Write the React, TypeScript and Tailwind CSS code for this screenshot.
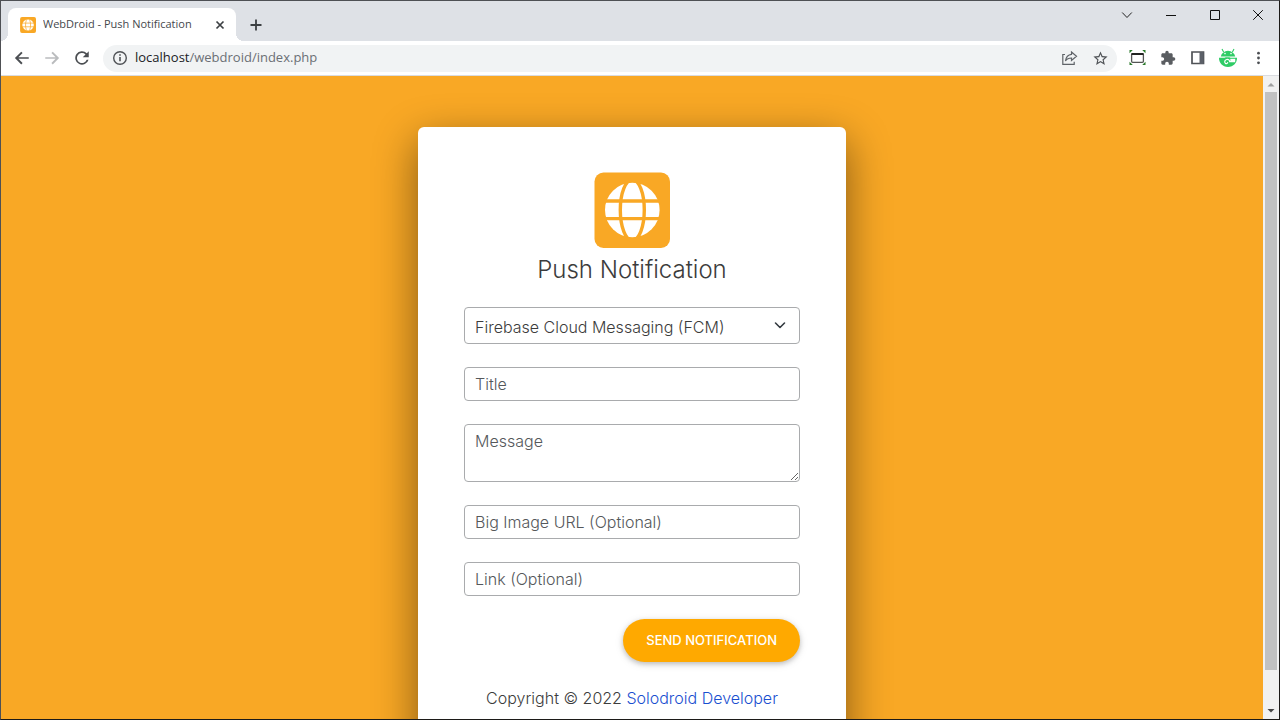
import type { ReactNode } from "react";

const ui = "font-['Open_Sans','Noto_Sans',sans-serif]";

function Globe({ className }: { className: string }) {
  return (
    <svg viewBox="0 0 76 76" className={className} aria-hidden="true">
      <rect x="0.5" y="0.5" width="75.5" height="75.5" rx="9" fill="#f9a825" />
      <circle cx="38.300" cy="38" r="27.3" fill="#fff" />
      <g fill="none" stroke="#f9a825" strokeWidth="3.4">
        <ellipse cx="38.300" cy="38" rx="12" ry="30.500" />
        <path d="M9 29h58M9 46.600h58" />
      </g>
    </svg>
  );
}

function IconButton({ label, className, children }: { label: string; className: string; children: ReactNode }) {
  return (
    <button type="button" aria-label={label} className={`flex shrink-0 items-center justify-center ${className}`}>
      {children}
    </button>
  );
}

function TabStrip() {
  return (
    <header className="flex h-10 shrink-0 items-end bg-[#dee1e6] pl-[7px]">
      <div className="relative flex h-[33px] w-[228px] items-center rounded-t-lg bg-white pl-3 pr-2 text-[#45484c]">
        <span className="absolute -left-2 bottom-0 size-2 bg-[radial-gradient(circle_at_0_0,transparent_8px,white_8px)]" />
        <span className="absolute -right-2 bottom-0 size-2 bg-[radial-gradient(circle_at_100%_0,transparent_8px,white_8px)]" />
        <Globe className="size-4 shrink-0" />
        <span className={`${ui} ml-[7px] flex-1 truncate text-[11px]`}>WebDroid - Push Notification</span>
        <IconButton label="Close tab" className="size-4">
          <svg viewBox="0 0 16 16" className="size-4" stroke="#3c4043" strokeWidth="1.700"><path d="M4.500 4.500l7 7M11.500 4.500l-7 7" /></svg>
        </IconButton>
      </div>
      <IconButton label="New tab" className="ml-3 h-[33px] w-4">
        <svg viewBox="0 0 16 16" className="size-4" stroke="#3c4043" strokeWidth="1.800"><path d="M8 2.500v11M2.500 8h11" /></svg>
      </IconButton>
      <div className="ml-auto flex h-[27px] self-start">
        <IconButton label="Search tabs" className="w-11">
          <svg viewBox="0 0 14 14" className="size-3.5" fill="none" stroke="#222"><path d="M2.200 4.500L7 9.500l4.800-5" /></svg>
        </IconButton>
        <IconButton label="Minimize" className="w-11">
          <svg viewBox="0 0 14 14" className="size-3.5" fill="none" stroke="#111"><path d="M2 7.500h10" /></svg>
        </IconButton>
        <IconButton label="Maximize" className="w-11">
          <svg viewBox="0 0 14 14" className="size-3.5" fill="none" stroke="#111"><path d="M2.500 2.500h9v9h-9z" /></svg>
        </IconButton>
        <IconButton label="Close window" className="w-[42px]">
          <svg viewBox="0 0 14 14" className="size-3.5" fill="none" stroke="#111"><path d="M2.200 2.200l9.600 9.600M11.800 2.200l-9.600 9.600" /></svg>
        </IconButton>
      </div>
    </header>
  );
}

function Toolbar() {
  return (
    <nav className="flex h-[35px] shrink-0 items-center border-b border-[#dadce0] bg-white px-3">
      <div className="flex gap-3">
        <IconButton label="Back" className="size-[18px]">
          <svg viewBox="0 0 24 24" className="size-[18px]" fill="#4b4e52"><path d="M21 10.900H7.200l5.600-5.600L11 3.500 2.500 12l8.500 8.500 1.800-1.800-5.600-5.600H21z" /></svg>
        </IconButton>
        <IconButton label="Forward" className="size-[18px]">
          <svg viewBox="0 0 24 24" className="size-[18px]" fill="#babcbe"><path d="M3 10.900h13.800l-5.600-5.600L13 3.500l8.500 8.500-8.500 8.500-1.800-1.800 5.600-5.600H3z" /></svg>
        </IconButton>
        <IconButton label="Reload" className="size-[18px]">
          <svg viewBox="0 0 24 24" className="size-[18px]" fill="#4b4e52"><path d="M18.400 5.600A9 9 0 1 0 20.700 14.300h-2.400A6.700 6.700 0 1 1 16.700 7.300L13 11h8V3z" /></svg>
        </IconButton>
      </div>
      <div className="ml-3 flex h-[27px] min-w-0 flex-1 items-center rounded-full bg-[#f1f3f4] px-2">
        <svg viewBox="0 0 18 18" className="size-[18px] shrink-0" fill="none" stroke="#4f5256" strokeWidth="1.400" aria-hidden="true">
          <circle cx="9" cy="9" r="6.300" /><path d="M9 8v4.300M9 5.300v1.500" strokeWidth="1.600" />
        </svg>
        <div className={`${ui} ml-1.5 flex-1 text-[13px] text-[#6b6f74]`}>
          <span className="text-[#202124]">localhost</span>/webdroid/index.php
        </div>
        <IconButton label="Share page" className="size-[18px]">
          <svg viewBox="0 0 18 18" className="size-[18px]" fill="none" stroke="#5f6368" strokeWidth="1.200"><path d="M4 5.500H1.800v9.800h11.400v-2.500" /><path d="M10.500 3l5 4.300-5 4.200V9c-2.700 0-4.700.9-6 3 .5-3.700 2.500-6.200 6-6.600z" /></svg>
        </IconButton>
        <IconButton label="Bookmark this tab" className="ml-3 size-[18px]">
          <svg viewBox="0 0 24 24" className="size-[17px]" fill="#4f5256"><path d="M22 9.240l-7.190-.62L12 2 9.190 8.630 2 9.240l5.460 4.730L5.820 21 12 17.270 18.180 21l-1.630-7.030L22 9.240zM12 15.400l-3.760 2.270 1-4.280-3.320-2.880 4.380-.38L12 6.100l1.710 4.040 4.380.38-3.320 2.880 1 4.280L12 15.400z" /></svg>
        </IconButton>
      </div>
      <div className="ml-3 flex items-center gap-3">
        <IconButton label="Screen capture" className="size-[18px]">
          <svg viewBox="0 0 18 18" className="size-[18px]" fill="none">
            <rect x="2.600" y="4.700" width="11.800" height="8.600" rx="1" stroke="#555" strokeWidth="1.300" />
            <path d="M2.500 5h12" stroke="#222" strokeWidth="2" />
            <path d="M.5 1h3.300L.5 4.200zM16.500 1h-3.300l3.300 3.200zM.5 16h3.300L.5 12.800zM16.500 16h-3.300l3.300-3.200z" fill="#2c7a2c" />
          </svg>
        </IconButton>
        <IconButton label="Extensions" className="size-[18px]">
          <svg viewBox="0 0 24 24" className="size-4" fill="#5a5d61"><path d="M20.500 11H19V7c0-1.100-.9-2-2-2h-4V3.500a2.500 2.500 0 0 0-5 0V5H4c-1.100 0-1.990.9-1.990 2v3.800H3.500c1.490 0 2.700 1.210 2.700 2.700s-1.210 2.700-2.700 2.700H2V20c0 1.100.9 2 2 2h3.800v-1.500c0-1.490 1.210-2.700 2.700-2.700 1.490 0 2.700 1.210 2.700 2.700V22H17c1.100 0 2-.9 2-2v-4h1.500a2.500 2.500 0 0 0 0-5z" /></svg>
        </IconButton>
        <IconButton label="Side panel" className="size-[18px]">
          <svg viewBox="0 0 18 18" className="size-[18px]" fill="none"><path d="M3 3h11.500v11.500h-11.500z" stroke="#4f5256" strokeWidth="1.700" /><path d="M10.500 3h4v12h-4z" fill="#5c6068" /></svg>
        </IconButton>
        <IconButton label="Profile" className="size-[18px]">
          <svg viewBox="0 0 20 20" className="size-5 shrink-0" fill="none">
            <path d="M5.600 4L4 1M14.400 4L16 1" stroke="#2fcc66" strokeWidth="1.100" />
            <path d="M2.800 8.500a7.300 6.800 0 0 1 14.400 0z" fill="#2fcc66" />
            <circle cx="7" cy="5.600" r=".8" fill="#fff" /><circle cx="13" cy="5.600" r=".8" fill="#fff" />
            <path d="M1 9.800h5.500c1-.6 5-.6 6 0H19c.2 5-3.500 9.200-9 9.200S.8 14.800 1 9.800z" fill="#2fcc66" />
            <path d="M16.500 11.500v2.200h-4.800c-.2-1.700-1.500-2.500-3-2.200-1.900.4-2.600 2.500-1.400 3.700 1 .9 2.600.3 2.300-1" stroke="#fff" strokeWidth="1.200" />
            <path d="M12.300 10.800h4.900v2.800h-4.900z" fill="#fff" />
          </svg>
        </IconButton>
        <IconButton label="Menu" className="size-[18px]">
          <svg viewBox="0 0 18 18" className="size-[18px]" fill="#4b4e52"><circle cx="9.500" cy="4.200" r="1.400" /><circle cx="9.500" cy="9" r="1.400" /><circle cx="9.500" cy="13.800" r="1.400" /></svg>
        </IconButton>
      </div>
    </nav>
  );
}

const field =
  "block w-full rounded border border-[#a9abad] bg-white px-2.5 text-base font-light text-[#3c3c3c] outline-none placeholder:text-[#55585b] placeholder:opacity-100";

function PushForm() {
  return (
    <form
      className="flex w-full max-w-[428px] flex-col rounded-md bg-white px-[46px] pb-12 pt-[45px] font-light text-[#3c3c3c] shadow-[0_14px_44px_rgba(0,0,0,0.48)]"
      onSubmit={(event) => event.preventDefault()}
    >
      <Globe className="size-[76px] self-center" />
      <h1 className="mt-1.5 text-center text-2xl leading-8">Push Notification</h1>
      <div className="mt-[21px] flex flex-col gap-[23px]">
        <div className="relative">
          <select aria-label="Service" className={`${field} h-[37px] appearance-none pt-0.5`}>
            <option>Firebase Cloud Messaging (FCM)</option>
            <option>OneSignal</option>
          </select>
          <svg viewBox="0 0 16 16" className="pointer-events-none absolute right-3 top-2.5 size-4" fill="none" stroke="#343a40" strokeWidth="1.600" strokeLinecap="round" strokeLinejoin="round">
            <path d="M3.500 6L8 10.500 12.500 6" />
          </svg>
        </div>
        <input aria-label="Title" placeholder="Title" className={`${field} h-[34px]`} />
        <textarea aria-label="Message" placeholder="Message" className={`${field} h-[58px] resize py-1 leading-6`} />
        <input aria-label="Big image URL" placeholder="Big Image URL (Optional)" className={`${field} h-[34px]`} />
        <input aria-label="Link" placeholder="Link (Optional)" className={`${field} h-[34px]`} />
        <button
          type="submit"
          className="h-[43px] self-end rounded-full bg-[#ffa900] px-[23px] text-[13px] font-medium text-white shadow-[0_2px_5px_rgba(0,0,0,0.2),0_2px_10px_rgba(0,0,0,0.1)]"
        >
          SEND NOTIFICATION
        </button>
      </div>
      <p className="mt-6 text-center text-base">
        Copyright © 2022 <a href="#developer" className="text-[#1a4fd0]">Solodroid Developer</a>
      </p>
    </form>
  );
}

function Scrollbar() {
  return (
    <div className="flex w-4 shrink-0 flex-col items-center bg-[#f1f1f1]" aria-hidden="true">
      <svg viewBox="0 0 16 16" className="size-4 shrink-0" fill="#a0a0a0"><path d="M4.500 10.500L8 7l3.500 3.500z" /></svg>
      <div className="w-3 grow-[578] bg-[#c1c1c1]" />
      <div className="grow-[33]" />
      <svg viewBox="0 0 16 16" className="size-4 shrink-0" fill="#444"><path d="M4.500 6L8 9.500 11.500 6z" /></svg>
    </div>
  );
}

export default function App() {
  return (
    <div className="flex h-screen flex-col border border-[#4e5054] border-b-[#1c1a18] border-r-[#1c1a18] bg-white">
      <TabStrip />
      <Toolbar />
      <div className="flex min-h-0 flex-1">
        <main className="flex min-w-0 flex-1 items-start justify-center overflow-hidden bg-[#f9a825] pt-[51px] font-[Inter,sans-serif]">
          <PushForm />
        </main>
        <Scrollbar />
      </div>
    </div>
  );
}
